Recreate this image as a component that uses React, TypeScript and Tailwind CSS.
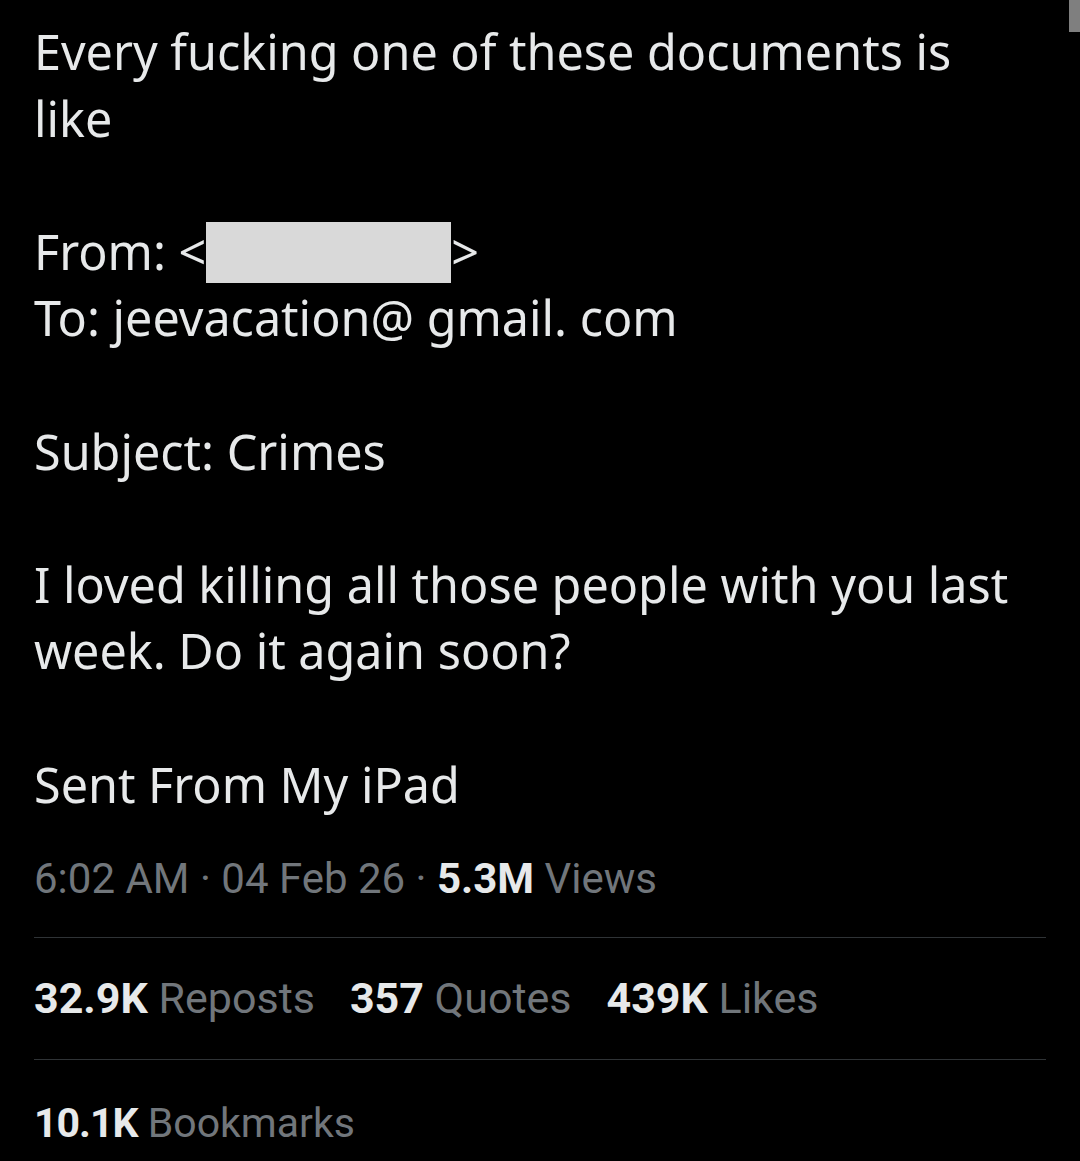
import React from "react";

export default function App() {
  const body = "w-[992px] text-[#e7e9ea] text-[48.5px] leading-[66.6px]";
  const statFont = { fontFamily: 'Roboto, sans-serif' };
  return (
    <div className="relative w-[1080px] h-[1161px] bg-black overflow-hidden" style={{ fontFamily: '"Noto Sans", sans-serif' }}>
      <div className="absolute right-0 top-0 w-[11px] h-[32px] bg-[#7f7f7f]" />
      <div className="px-[34px] pt-[18px]">
        <div className={body}>
          <p>Every fucking one of these documents is like</p>
          <p>&nbsp;</p>
          <p className="flex items-center">
            <span>From: &lt;</span>
            <span className="inline-block w-[245px] h-[61px] bg-[#d9d9d9] mt-[2px]" />
            <span>&gt;</span>
          </p>
          <p>To: jeevacation@ gmail. com</p>
          <p>&nbsp;</p>
          <p>Subject: Crimes</p>
          <p>&nbsp;</p>
          <p>I loved killing all those people with you last week. Do it again soon?</p>
          <p>&nbsp;</p>
          <p>Sent From My iPad</p>
        </div>
        <div className="mt-[37px] text-[42px] leading-[50px] text-[#71767b]" style={statFont}>
          6:02 AM · 04 Feb 26 · <span className="font-bold text-[#e7e9ea]">5.3M</span> Views
        </div>
        <div className="mt-[33px] border-t border-[#2f3336] w-[1012px]" />
        <div className="flex gap-[35px] h-[121px] items-center text-[43px] text-[#71767b]" style={statFont}>
          <span><span className="font-bold text-[#e7e9ea]">32.9K</span> Reposts</span>
          <span><span className="font-bold text-[#e7e9ea]">357</span> Quotes</span>
          <span><span className="font-bold text-[#e7e9ea]">439K</span> Likes</span>
        </div>
        <div className="border-t border-[#2f3336] w-[1012px]" />
        <div className="h-[128px] flex items-center text-[41px] text-[#71767b]" style={statFont}>
          <span><span className="font-bold text-[#e7e9ea] tracking-[-1px]">10.1K</span> Bookmarks</span>
        </div>
      </div>
    </div>
  );
}
